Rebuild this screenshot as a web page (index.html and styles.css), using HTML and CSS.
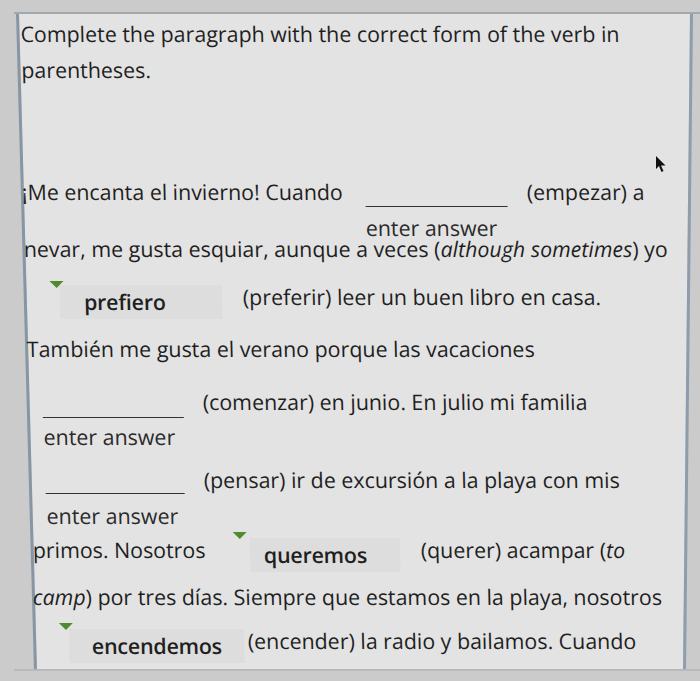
FILE: index.html
```html
<!DOCTYPE html>
<html lang="en">
<head>
    <meta charset="UTF-8">
    <meta name="viewport" content="width=device-width, initial-scale=1.0">
    <title>Fill in the verbs</title>
    <link rel="stylesheet" href="styles.css">
</head>
<body>
    <div class="panel">
        <div class="content">
            <p class="prompt">Complete the paragraph with the correct form of the verb in parentheses.</p>

            <div class="row row-a">
                <span class="text lead-a">¡Me encanta el invierno! Cuando</span>
                <span class="blank blank-a"><span class="field"></span><span class="label">enter answer</span></span>
                <span class="text after-a">(empezar) a</span>
            </div>
            <div class="row row-b">
                <span class="text">nevar, me gusta esquiar, aunque a veces (<i>although sometimes</i>) yo</span>
            </div>
            <div class="row row-c">
                <span class="pick pick-c"><span class="arrow"></span><span class="choice">prefiero</span></span>
                <span class="text after-c">(preferir) leer un buen libro en casa.</span>
            </div>
            <div class="row row-d">
                <span class="text">También me gusta el verano porque las vacaciones</span>
            </div>
            <div class="row row-e">
                <span class="blank blank-e"><span class="field"></span><span class="label">enter answer</span></span>
                <span class="text after-e">(comenzar) en junio. En julio mi familia</span>
            </div>
            <div class="row row-f">
                <span class="blank blank-f"><span class="field"></span><span class="label">enter answer</span></span>
                <span class="text after-f">(pensar) ir de excursión a la playa con mis</span>
            </div>
            <div class="row row-g">
                <span class="text lead-g">primos. Nosotros</span>
                <span class="pick pick-g"><span class="arrow"></span><span class="choice">queremos</span></span>
                <span class="text after-g">(querer) acampar (<i>to</i></span>
            </div>
            <div class="row row-h">
                <span class="text"><i>camp</i>) por tres días. Siempre que estamos en la playa, nosotros</span>
            </div>
            <div class="row row-i">
                <span class="pick pick-i"><span class="arrow"></span><span class="choice">encendemos</span></span>
                <span class="text after-i">(encender) la radio y bailamos. Cuando</span>
            </div>
        </div>
        <svg class="pointer" width="12" height="19" viewBox="0 0 12 19">
            <path d="M1 1 L1 14 L4 11 L6.5 17 L8.5 16 L6 10.5 L10.5 10.5 Z" fill="#111"/>
        </svg>
    </div>
</body>
</html>
```

FILE: styles.css
```css
body {
    margin: 0;
    background: #cbcbcb;
    font-family: 'Open Sans', 'DejaVu Sans', sans-serif;
    color: #1f1f1f;
    overflow: hidden;
}

.panel {
    margin: 12px 0 0 14px;
    height: 655px;
    background: #e3e3e3;
    border-top: 2px solid #a3a8ad;
    border-bottom: 2px solid #b9b9b9;
    overflow: hidden;
    position: relative;
}

/* the screen was photographed a little askew, so the side edges lean */
.panel::before {
    content: "";
    position: absolute;
    top: 0;
    bottom: 0;
    left: -30px;
    width: 32px;
    background: #cbcbcb;
    border-right: 3px solid #8696a5;
    transform: skewX(1.57deg);
    transform-origin: 0 0;
}

.panel::after {
    content: "";
    position: absolute;
    top: 0;
    bottom: 0;
    left: 676px;
    width: 40px;
    background: #cbcbcb;
    border-left: 3px solid #8e9dab;
    transform: skewX(-0.61deg);
    transform-origin: 0 0;
}

.pointer {
    position: absolute;
    left: 641px;
    top: 141px;
}

.content {
    transform: skewX(1.4deg);
    transform-origin: 0 0;
}

.prompt {
    margin: 2px 0 0 0;
    padding-left: 6px;
    font-size: 21.4px;
    line-height: 36px;
    width: 640px;
    height: 164px;
}

.row {
    display: flex;
    align-items: flex-start;
    font-size: 21.4px;
    line-height: 24px;
    white-space: nowrap;
}

.text {
    display: block;
    flex-shrink: 0;
}

.row-a { height: 57px; padding-left: 3.5px; }
.row-b { height: 48px; padding-left: 4px; }
.row-c { height: 52px; padding-left: 39px; }
.row-d { height: 53px; padding-left: 4.6px; }
.row-e { height: 78px; padding-left: 19.3px; }
.row-f { height: 70px; padding-left: 20.4px; }
.row-g { height: 47px; padding-left: 5.7px; }
.row-h { height: 44px; padding-left: 4.6px; }
.row-i { height: 40px; padding-left: 40px; }

/* fill-in blanks */
.blank {
    display: flex;
    flex-direction: column;
    flex-shrink: 0;
    width: 141px;
}

.field {
    display: block;
    border-bottom: 1px solid #333;
}

.label {
    display: block;
    color: #2a2a2a;
}

.lead-a { width: 343px; }
.blank-a { width: 142px; }
.blank-a .field { height: 26px; }
.blank-a .label { margin-top: 9px; }
.after-a { margin-left: 20px; }

.blank-e .field { height: 27px; }
.blank-e .label { margin-top: 7px; }
.after-e { margin-left: 19px; }

.blank-f { width: 139px; }
.blank-f .field { height: 25px; }
.blank-f .label { margin-top: 10px; }
.after-f { margin-left: 19px; }

/* dropdown picks */
.pick {
    display: block;
    flex-shrink: 0;
    position: relative;
    height: 34px;
    background: #dddddd;
}

.arrow {
    position: absolute;
    top: -4px;
    width: 0;
    height: 0;
    border-left: 7px solid transparent;
    border-right: 7px solid transparent;
    border-top: 7px solid #4f8c2d;
}

.choice {
    display: block;
    font-weight: 600;
    padding-top: 5px;
    letter-spacing: -0.2px;
}

.pick-c { width: 162px; }
.pick-c .arrow { left: -10px; }
.pick-c .choice { padding-left: 24px; }
.after-c { margin-left: 21px; }

.lead-g { width: 217px; }
.pick-g { width: 150px; }
.pick-g .arrow { left: -17px; top: -6px; }
.pick-g .choice { padding-left: 14px; }
.after-g { margin-left: 21px; }

.pick-i { width: 175px; }
.pick-i .arrow { left: -10.5px; top: -6px; }
.pick-i .choice { padding-left: 22.5px; }
.after-i { margin-left: 3.5px; }
```
